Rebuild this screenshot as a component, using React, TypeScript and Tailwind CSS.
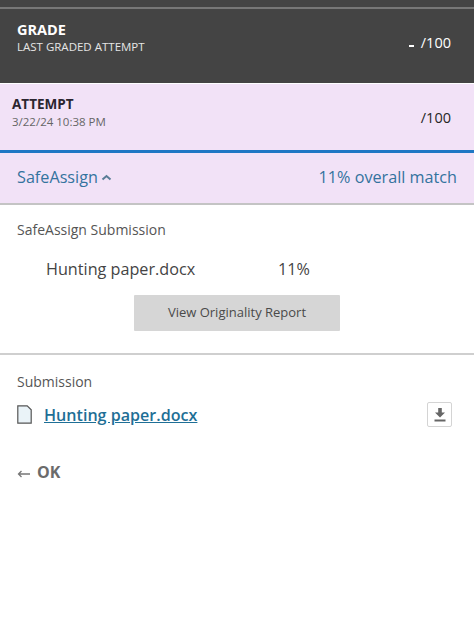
export default function App() {
  return (
    <div className="min-h-[641px] bg-white font-['Open_Sans',sans-serif] text-[#333]">
      <div className="h-[7px] bg-[#444]" />
      <div className="h-[2px] bg-[#777]" />
      <div className="flex h-[74px] items-start justify-between bg-[#444] pl-[17px] pr-[23px] pt-[12px] text-white">
        <div>
          <div className="text-[14.5px] font-bold leading-[18px]">GRADE</div>
          <div className="text-[11.5px] leading-[16px] text-[#e6e6e6]">LAST GRADED ATTEMPT</div>
        </div>
        <div className="flex items-center gap-[7px] pt-[12px] text-[14.5px] leading-[20px]">
          <span className="mt-[6px] h-[2px] w-[5px] bg-white" />
          <span>/100</span>
        </div>
      </div>
      <div className="h-px bg-white" />
      <div className="flex h-[66px] items-start justify-between bg-[#f2e2f7] pl-[12px] pr-[23px] pt-[12px]">
        <div>
          <div className="text-[13.5px] font-bold leading-[17px] text-[#2b2630]">ATTEMPT</div>
          <div className="text-[11.5px] leading-[17px] text-[#666]">3/22/24 10:38 PM</div>
        </div>
        <div className="pt-[12px] text-[14.5px] leading-[20px] text-[#262626]">/100</div>
      </div>
      <div className="h-[3px] bg-[#1f77c4]" />
      <div className="flex h-[50px] items-center justify-between bg-[#f2e2f7] pl-[17px] pr-[17px] pb-[1px] text-[16.2px] text-[#34739e]">
        <div className="flex items-center gap-[3px]">
          <span>SafeAssign</span>
          <svg width="11" height="7" viewBox="0 0 11 7" className="mt-[1px]" fill="none" stroke="#5a7d96" strokeWidth="2">
            <path d="M1.5 5.5 5.5 2l4 3.5" />
          </svg>
        </div>
        <span>11% overall match</span>
      </div>
      <div className="h-[2px] bg-[#c4c4c4]" />
      <div className="h-[148px] pt-[15px]">
        <div className="pl-[17px] text-[14px] leading-[20px] text-[#555]">SafeAssign Submission</div>
        <div className="mt-[18px] flex pl-[46px] text-[16.2px] leading-[22px] text-[#444]">
          <span className="w-[232px]">Hunting paper.docx</span>
          <span>11%</span>
        </div>
        <div className="mt-[15px] flex justify-center">
          <div className="flex h-[36px] w-[206px] items-center justify-center rounded-[1px] bg-[#d6d6d6] text-[13px] text-[#4a4a4a]">
            View Originality Report
          </div>
        </div>
      </div>
      <div className="h-[2px] bg-[#cfcfcf]" />
      <div className="pt-[17px]">
        <div className="pl-[17px] text-[14px] leading-[20px] text-[#555]">Submission</div>
        <div className="mt-[10px] flex items-center justify-between pl-[17px] pr-[22px]">
          <div className="flex items-center gap-[12px]">
            <svg width="15" height="19" viewBox="0 0 15 19" fill="#eaf3f8" stroke="#555" strokeWidth="1.2">
              <path d="M.8.8h9.4l4 4v13.4H.8z" />
            </svg>
            <span className="text-[16.1px] font-semibold leading-[22px] text-[#1f6f96] underline">Hunting paper.docx</span>
          </div>
          <div className="flex h-[25px] w-[25px] items-center justify-center rounded-[2px] border border-[#d4d4d4] bg-white">
            <svg width="12" height="14" viewBox="0 0 12 14" fill="#666">
              <path d="M4.2 0h3.6v4.6H11L6 9.6 1 4.6h3.2zM.5 11.5h11v2H.5z" />
            </svg>
          </div>
        </div>
        <div className="mt-[34px] flex items-center gap-[6px] pl-[17px] text-[#6b6b6b]">
          <svg width="14" height="8" viewBox="0 0 14 8" className="mt-[4px]" fill="none" stroke="#777" strokeWidth="1.3">
            <path d="M13 4H1.5M4.5 1 1.5 4l3 3" />
          </svg>
          <span className="text-[16px] font-bold leading-[22px]">OK</span>
        </div>
      </div>
    </div>
  );
}
